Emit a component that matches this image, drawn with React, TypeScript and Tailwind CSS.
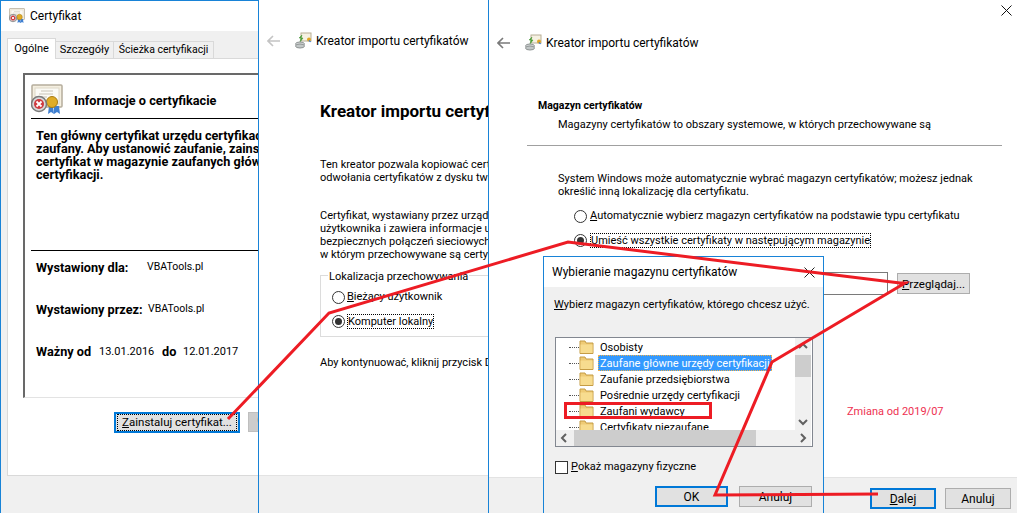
import type { ReactNode } from "react";

const blueEdge = "border-l border-[#1883d7]";

function CertIcon({ size }: { size: number }) {
  return (
    <svg width={size} height={size} viewBox="0 0 32 32" className="shrink-0">
      <rect x="1" y="1" width="30" height="22" rx="1" fill="#f4efe0" stroke="#b5ad9c" strokeWidth="1.5" />
      <rect x="4" y="4" width="24" height="16" fill="#fbfaf5" stroke="#ddd8c8" />
      <path d="M10 7h12M8 10h14M8 13h8" stroke="#c9c4b6" />
      <path d="M18 22l-1 8 3-2 3 2-1-8zM23 22l0 8 3-2 3 2-1-8z" fill="#3f7fd0" />
      <circle cx="21" cy="18" r="5.5" fill="#e0ac26" stroke="#a87b12" />
      <circle cx="8" cy="20" r="7.5" fill="#d9d9d9" stroke="#7a7a7a" strokeWidth="1.5" />
      <circle cx="8" cy="20" r="5" fill="#cf3a3f" />
      <path d="M5.5 17.5l5 5M10.5 17.5l-5 5" stroke="#fff" strokeWidth="1.8" />
    </svg>
  );
}

function WizardIcon() {
  return (
    <svg width="17" height="17" viewBox="0 0 17 17" className="shrink-0">
      <rect x="6" y="1" width="10" height="8" fill="#f6f1e2" stroke="#b8ae95" />
      <circle cx="14" cy="7.5" r="2" fill="#e0a526" />
      <path d="M14 8l1 2 .8-.6" stroke="#3f7fd0" fill="none" />
      <path d="M7 3l-3 3h2l-1 4 3-4H6l1-3z" fill="#4fae3a" stroke="#3c8e2c" strokeWidth="0.5" />
      <ellipse cx="5" cy="12" rx="4.5" ry="2" fill="#d5d8d8" stroke="#8f9494" />
      <ellipse cx="5" cy="14" rx="4.5" ry="2" fill="#c2c7c7" stroke="#8f9494" />
    </svg>
  );
}

function BackArrow({ dark }: { dark?: boolean }) {
  return (
    <svg width="13" height="12" viewBox="0 0 13 12" className="shrink-0">
      <path d="M6 1L1 6l5 5M1 6h12" fill="none" stroke={dark ? "#7a7a7a" : "#c4c4c4"} strokeWidth="1.6" />
    </svg>
  );
}

function Folder() {
  return (
    <svg width="15" height="14" viewBox="0 0 15 14" className="shrink-0">
      <path d="M1 3V1h5l1 2h7v10.5H1z" fill="#efcb75" stroke="#c59c45" />
      <rect x="1.5" y="4.5" width="12" height="8.5" fill="#f7dc8f" />
    </svg>
  );
}

function Radio({ checked }: { checked?: boolean }) {
  return (
    <span className="flex h-[13px] w-[13px] shrink-0 items-center justify-center rounded-full border border-[#333333] bg-white">
      {checked && <span className="h-[7px] w-[7px] rounded-full bg-[#333333]" />}
    </span>
  );
}

function WinButton({ children, width, focused }: { children: ReactNode; width: string; focused?: boolean }) {
  return (
    <div
      className={`flex h-[21px] shrink-0 items-center justify-center whitespace-nowrap bg-[#e1e1e1] text-[12px] ${width} ${
        focused ? "border-2 border-[#0078d7]" : "border border-[#adadad]"
      }`}
    >
      {children}
    </div>
  );
}

function Line({ children, className = "" }: { children: ReactNode; className?: string }) {
  return <div className={`whitespace-nowrap ${className}`}>{children}</div>;
}

function CertificateWindow() {
  return (
    <div className={`absolute left-0 top-0 h-[513px] w-[258px] overflow-hidden border-t border-[#1883d7] bg-[#f0f0f0] ${blueEdge}`}>
      <div className="flex h-[30px] items-center gap-[5px] bg-white pl-2 text-[12px]">
        <CertIcon size={16} />
        <span>Certyfikat</span>
      </div>
      <div className="pl-[6px] pt-[7px]">
        <div className="flex h-[21px] items-start whitespace-nowrap">
          <div className="relative z-10 flex h-[21px] w-[49px] items-center justify-center border border-b-0 border-[#d9d9d9] bg-white">Ogólne</div>
          <div className="mt-[3px] flex h-[18px] w-[58px] items-center justify-center border border-l-0 border-[#d9d9d9]">Szczegóły</div>
          <div className="mt-[3px] flex h-[18px] w-[100px] items-center justify-center border border-l-0 border-[#d9d9d9] text-[10.5px]">Ścieżka certyfikacji</div>
        </div>
        <div className="-mt-px h-[418px] w-[400px] border border-[#d9d9d9] bg-white pl-[15px] pt-[14px]">
          <div className="h-[325px] w-[380px] border-b border-l-2 border-t-2 border-b-[#e3e3e3] border-l-[#696969] border-t-[#696969] pl-[6px] pt-[9px]">
            <div className="flex items-center gap-[11px]">
              <CertIcon size={32} />
              <span className="mt-[2px] text-[12.7px] font-bold">Informacje o certyfikacie</span>
            </div>
            <div className="mt-[2px] h-px bg-black" />
            <div className="pl-[5px] pt-[10px] text-[12.7px] font-bold leading-[13px]">
              <Line>Ten główny certyfikat urzędu certyfikacji nie jest</Line>
              <Line>zaufany. Aby ustanowić zaufanie, zainstaluj ten</Line>
              <Line>certyfikat w magazynie zaufanych głównych urzędów</Line>
              <Line>certyfikacji.</Line>
            </div>
            <div className="mt-[69px] h-px bg-black" />
            <div className="pl-[5px] pt-[9px] text-[12.7px]">
              <div className="flex h-[16px] items-center">
                <span className="w-[111px] font-bold">Wystawiony dla:</span>
                <span className="-mt-[2px] text-[10.5px]">VBATools.pl</span>
              </div>
              <div className="mt-[26px] flex h-[16px] items-center">
                <span className="w-[112px] font-bold">Wystawiony przez:</span>
                <span className="-mt-[2px] text-[10.5px]">VBATools.pl</span>
              </div>
              <div className="mt-[26px] flex h-[16px] items-center">
                <span className="w-[63px] font-bold">Ważny od</span>
                <span className="w-[63px] text-[11px]">13.01.2016</span>
                <span className="w-[21px] font-bold">do</span>
                <span className="text-[11px]">12.01.2017</span>
              </div>
            </div>
          </div>
          <div className="flex gap-2 pl-[91px] pt-[14px]">
            <WinButton width="w-[126px]" focused>
              <span className="border border-dotted border-black px-[4px] text-[11.5px] leading-[15px]">
                <span className="underline">Z</span>ainstaluj certyfikat...
              </span>
            </WinButton>
            <div className="h-[20px] w-[70px] border border-[#bfbfbf] bg-[#cccccc] pl-2 text-[#9a9a9a]">Oświadczenie</div>
          </div>
        </div>
      </div>
    </div>
  );
}

function LocationWindow() {
  return (
    <div className={`absolute left-[258px] top-0 flex h-[513px] w-[230px] flex-col overflow-hidden bg-white ${blueEdge}`}>
      <div className="flex items-center pl-2 pt-[32px]">
        <BackArrow />
        <span className="ml-[15px]"><WizardIcon /></span>
        <span className="ml-[4px] whitespace-nowrap text-[12px]">Kreator importu certyfikatów</span>
      </div>
      <div className="flex-1 pl-[61px]">
        <Line className="mt-[51px] text-[17px] font-bold leading-[22px]">Kreator importu certyfikatów</Line>
        <div className="mt-[36px] leading-[13px]">
          <Line>Ten kreator pozwala kopiować certyfikaty, listy</Line>
          <Line>odwołania certyfikatów z dysku twardego do magazynu</Line>
        </div>
        <div className="mt-[25px] leading-[13px]">
          <Line>Certyfikat, wystawiany przez urząd certyfikacji, jest</Line>
          <Line>użytkownika i zawiera informacje używane do ochrony</Line>
          <Line>bezpiecznych połączeń sieciowych. Magazyn</Line>
          <Line>w którym przechowywane są certyfikaty.</Line>
        </div>
        <div className="relative mt-[14px] h-[62px] w-[300px] border border-[#dcdcdc] pl-[11px] pt-[13px]">
          <span className="absolute -top-[6px] left-[7px] whitespace-nowrap bg-white px-px leading-[14px]">Lokalizacja przechowywania</span>
          <div className="flex h-[16px] items-center gap-[2px]">
            <Radio />
            <span><span className="underline">B</span>ieżący użytkownik</span>
          </div>
          <div className="mt-[8px] flex h-[16px] items-center gap-[2px]">
            <Radio checked />
            <span className="border border-dotted border-black leading-[13px]">Komputer lokalny</span>
          </div>
        </div>
        <Line className="mt-[18px]">Aby kontynuować, kliknij przycisk Dalej.</Line>
      </div>
      <div className="h-[38px] border-t border-[#e3e3e3] bg-[#f0f0f0]" />
    </div>
  );
}

function StoreWindow() {
  return (
    <div className={`absolute left-[488px] top-0 flex h-[513px] w-[529px] flex-col overflow-hidden bg-white ${blueEdge}`}>
      <div className="flex items-center pl-2 pt-[34px]">
        <BackArrow dark />
        <span className="ml-[15px]"><WizardIcon /></span>
        <span className="ml-[4px] whitespace-nowrap text-[12px]">Kreator importu certyfikatów</span>
      </div>
      <div className="flex-1 pl-[38px] pr-[15px]">
        <Line className="ml-[11px] mt-[48px] text-[10.5px] font-bold leading-[14px]">Magazyn certyfikatów</Line>
        <Line className="mt-[4px] pl-[31px]">Magazyny certyfikatów to obszary systemowe, w których przechowywane są</Line>
        <div className="mt-[12px] h-px bg-[#a0a0a0]" />
        <div className="pl-[31px] pt-[26px] leading-[13px]">
          <Line>System Windows może automatycznie wybrać magazyn certyfikatów; możesz jednak</Line>
          <Line>określić inną lokalizację dla certyfikatu.</Line>
        </div>
        <div className="pl-[47px] pt-[10px]">
          <div className="flex h-[16px] items-center gap-[3px]">
            <Radio />
            <span><span className="underline">A</span>utomatycznie wybierz magazyn certyfikatów na podstawie typu certyfikatu</span>
          </div>
          <div className="mt-[8px] flex h-[16px] items-center gap-[3px]">
            <Radio checked />
            <span className="border border-dotted border-black leading-[13px]">Umieść wszystkie certyfikaty w następującym magazynie</span>
          </div>
        </div>
        <div className="flex items-start gap-[9px] pl-[16px] pt-[24px]">
          <div className="h-[23px] w-[345px] border border-[#7a7a7a] bg-white" />
          <div className="mt-px">
            <WinButton width="w-[73px]">
              <span className="text-[11.5px]"><span className="underline">P</span>rzeglądaj...</span>
            </WinButton>
          </div>
        </div>
        <Line className="ml-[320px] mt-[109px] text-[#ee3050]">Zmiana od 2019/07</Line>
      </div>
      <div className="flex h-[36px] justify-end gap-[9px] border-t border-[#e3e3e3] bg-[#f0f0f0] pr-[6px] pt-[10px]">
        <WinButton width="w-[66px]" focused>
          <span><span className="underline">D</span>alej</span>
        </WinButton>
        <WinButton width="w-[66px]">Anuluj</WinButton>
      </div>
    </div>
  );
}

const stores = [
  "Osobisty",
  "Zaufane główne urzędy certyfikacji",
  "Zaufanie przedsiębiorstwa",
  "Pośrednie urzędy certyfikacji",
  "Zaufani wydawcy",
  "Certyfikaty niezaufane",
];

function Arrow({ d }: { d: string }) {
  return (
    <svg width="16" height="16" viewBox="0 0 16 16" className="shrink-0">
      <path d={d} fill="none" stroke="#606060" strokeWidth="2" />
    </svg>
  );
}

function StoreDialog() {
  return (
    <div className="absolute left-[543px] top-[256px] h-[258px] w-[281px] border border-[#1883d7] bg-[#f0f0f0]">
      <div className="flex h-[30px] items-center justify-between bg-white pl-2 pr-[8px] text-[12px]">
        <span>Wybieranie magazynu certyfikatów</span>
        <svg width="11" height="11" viewBox="0 0 11 11">
          <path d="M.5.5l10 10M10.5.5l-10 10" stroke="#222222" />
        </svg>
      </div>
      <div className="pl-[10px] pt-[10px]">
        <Line><span className="underline">W</span>ybierz magazyn certyfikatów, którego chcesz użyć.</Line>
      </div>
      <div className="ml-[11px] mt-[24px] h-[110px] w-[258px] border border-[#828790] bg-white">
        <div className="flex h-[92px]">
          <div className="w-[239px] overflow-hidden pl-[13px] pt-px">
            {stores.map((name, i) => (
              <div key={name} className="flex h-[16px] items-center">
                <span className="h-px w-[10px] shrink-0 border-t border-dotted border-[#555555]" />
                <Folder />
                <span className={`ml-[4px] h-[16px] whitespace-nowrap px-[2px] pt-px leading-[15px] ${i === 1 ? "bg-[#3399ff] text-white outline-1 -outline-offset-1 outline-dotted outline-[#f2b04a]" : ""}`}>{name}</span>
              </div>
            ))}
          </div>
          <div className="flex w-[16px] flex-col bg-[#f0f0f0]">
            <Arrow d="M4 10l4-4 4 4" />
            <div className="mt-px h-[22px] bg-[#cdcdcd]" />
            <div className="flex-1" />
            <Arrow d="M4 6l4 4 4-4" />
          </div>
        </div>
        <div className="flex h-[16px] w-[255px] items-center bg-[#f0f0f0]">
          <Arrow d="M10 4l-4 4 4 4" />
          <div className="ml-[2px] h-[16px] w-[182px] bg-[#cdcdcd]" />
          <div className="flex-1" />
          <Arrow d="M6 4l4 4-4 4" />
        </div>
      </div>
      <div className="ml-[11px] mt-[12px] flex h-[16px] items-center gap-[3px]">
        <span className="h-[13px] w-[13px] border border-[#333333] bg-white" />
        <span><span className="underline">P</span>okaż magazyny fizyczne</span>
      </div>
      <div className="flex gap-[11px] pl-[111px] pt-[11px]">
        <WinButton width="w-[73px]" focused>OK</WinButton>
        <WinButton width="w-[73px]">Anuluj</WinButton>
      </div>
    </div>
  );
}

export default function App() {
  return (
    <div className="relative h-[513px] w-[1017px] overflow-hidden bg-white font-['Roboto',sans-serif] text-[11px] leading-[16px] text-black">
      <CertificateWindow />
      <LocationWindow />
      <StoreWindow />
      <svg width="11" height="11" viewBox="0 0 11 11" className="absolute left-[1001px] top-[5px]">
        <path d="M.5.5l10 10M10.5.5l-10 10" stroke="#111111" />
      </svg>
      <StoreDialog />
      {/* red arrows painted over the screenshots */}
      <div className="absolute left-[564px] top-[402px] h-[17px] w-[148px] border-[3px] border-[#ed1c24]" />
      <svg width="1017" height="513" className="pointer-events-none absolute left-0 top-0">
        <polyline
          points="228,419 329,313 568,242 900,283 905,283 772,362 715,495 878,494"
          fill="none"
          stroke="#ed1c24"
          strokeWidth="3"
        />
      </svg>
    </div>
  );
}
